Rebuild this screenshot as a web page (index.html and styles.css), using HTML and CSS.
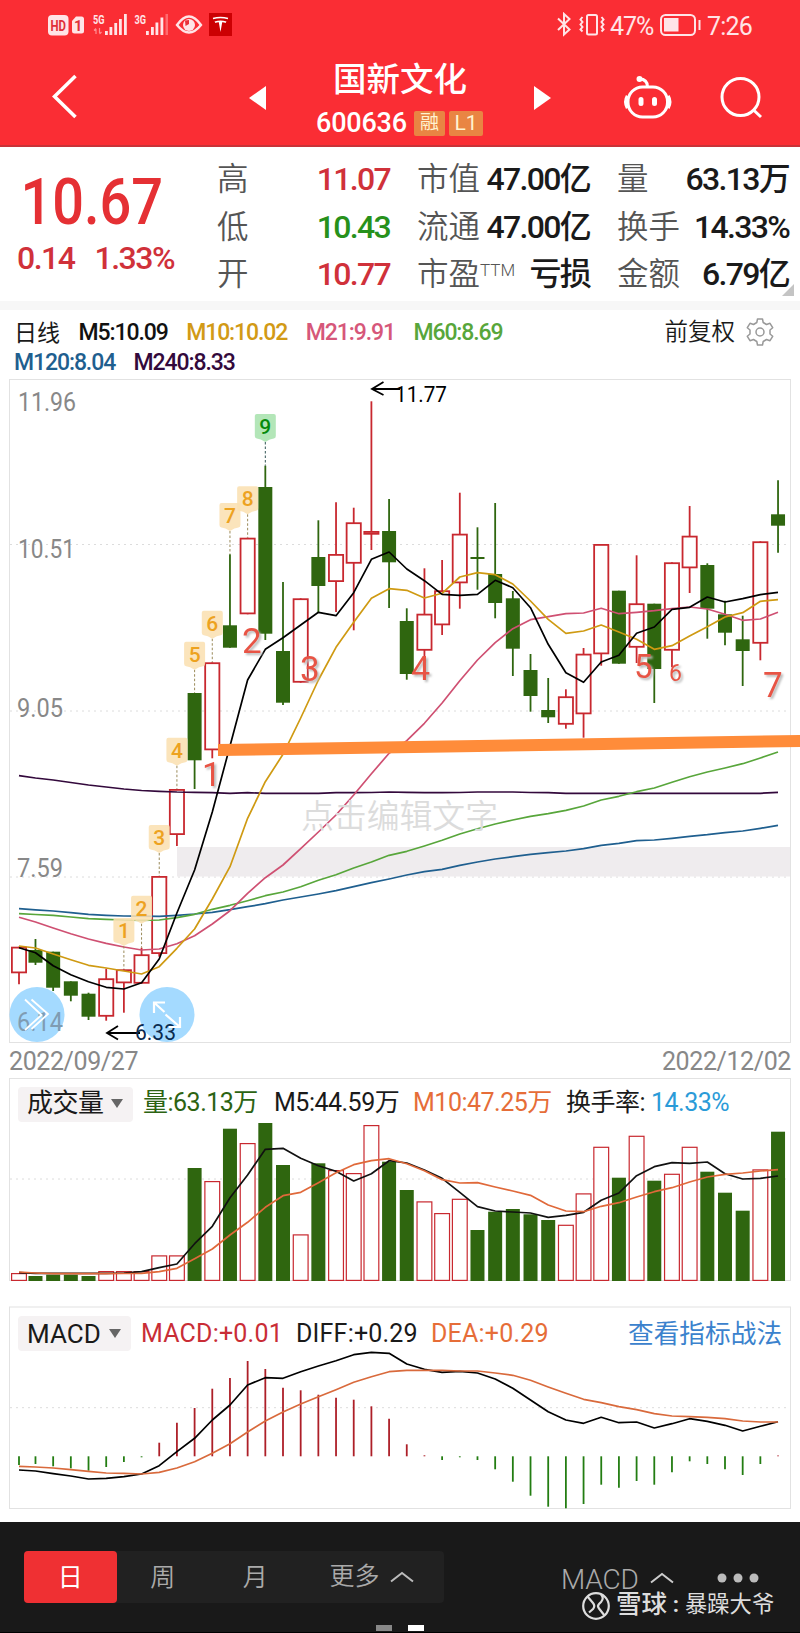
FILE: index.html
```
<!DOCTYPE html>
<html lang="zh-CN">
<head>
    <meta charset="UTF-8">
    <meta name="viewport" content="width=device-width, initial-scale=1.0">
    <title>国新文化 600636</title>
    <link rel="stylesheet" href="styles.css">
</head>
<body>

    <header class="header">
        <div class="status">
            <svg width="200" height="48" viewBox="40 0 200 48">
                <rect x="48" y="15" width="20.5" height="20.5" rx="4" fill="#ffe4e7"/>
                <text x="50.5" y="31" font-size="14.5" font-weight="700" fill="#e0303a" textLength="15.5" lengthAdjust="spacingAndGlyphs">HD</text>
                <path d="M76 16.5h5.5q2.5 0 2.5 2.5v12q0 2.5-2.5 2.5h-7q-2.5 0-2.5-2.5v-10z" fill="#ffe4e7"/>
                <text x="74" y="31" font-size="14.5" font-weight="700" fill="#e0303a">1</text>
                <text x="93" y="23.5" font-size="12.5" font-weight="700" fill="#ffe4e7" textLength="11.5" lengthAdjust="spacingAndGlyphs">5G</text>
                <path d="M96 29v5M94 30.500l2-2M99.500 28v5M101.500 32l-2 2" stroke="#ff8d92" stroke-width="1.2" fill="none"/>
                <g fill="#ffe4e7">
                    <rect x="105" y="31" width="2.8" height="4"/>
                    <rect x="109.5" y="27" width="2.8" height="8"/>
                    <rect x="114.3" y="23" width="2.8" height="12"/>
                    <rect x="119" y="19" width="2.8" height="16"/>
                    <rect x="124" y="14" width="2.8" height="21"/>
                    <rect x="146" y="31" width="2.8" height="4"/>
                    <rect x="151" y="27" width="2.8" height="8"/>
                    <rect x="155.5" y="22.5" width="2.8" height="12.5"/>
                    <rect x="160.5" y="17.5" width="2.8" height="17.5"/>
                </g>
                <rect x="165.5" y="14" width="2.5" height="21" fill="#ff6a6f"/>
                <text x="134.5" y="23.5" font-size="12.5" font-weight="700" fill="#ffe4e7" textLength="11.5" lengthAdjust="spacingAndGlyphs">3G</text>
                <path d="M177 25q12-17 24 0q-12 15-24 0z" fill="none" stroke="#ffe4e7" stroke-width="2.4"/>
                <circle cx="189" cy="25" r="6" fill="#ffe4e7"/>
                <path d="M185 20.500l4-.5v4l-3.500 2z" fill="#e8303a"/>
                <rect x="209" y="13" width="23" height="23" fill="#cc0003"/>
                <path d="M213 18.500q7.500-2 15 0" fill="none" stroke="#fff" stroke-width="1.4"/>
                <path d="M214.500 21.500q6-2 12 0l-1 1.500q-1.500-1-3.300-.8L220.500 32l-1.700-9.800q-1.800-.2-3.300.8z" fill="#fff"/>
            </svg>
            <div class="status-right">
                <svg width="50" height="26" viewBox="555 12 50 26" fill="none" stroke="#ffe4e7" stroke-width="2">
                    <path d="M558 18.500l11.500 11L564 34.500V14l5.500 5L558 30"/>
                    <rect x="587" y="15" width="10" height="19.5" rx="1.5"/>
                    <path d="M582.500 17l-2 2.500 2 2.500-2 2.500 2 2.500-2 2.500 2 2M601.500 17l2 2.500-2 2.500 2 2.500-2 2.500 2 2.500-2 2"/>
                </svg>
                <span class="battery-text">47%</span>
                <svg width="42" height="26" viewBox="657 12 42 26" fill="none" stroke="#ffe4e7">
                    <rect x="659" y="15" width="34" height="20" rx="4.5" stroke-width="2"/>
                    <rect x="662" y="18" width="14.5" height="13.5" fill="#ffe4e7" stroke="none"/>
                    <path d="M697.500 20v10" stroke-width="2"/>
                </svg>
                <span class="clock">7:26</span>
            </div>
        </div>
        <div class="nav">
            <div class="nav-back">
                <svg width="26" height="46" viewBox="52 73 26 46"><path d="M75.500 76L54.500 96.500L75.500 117" fill="none" stroke="#fff" stroke-width="3.6"/></svg>
            </div>
            <div class="nav-center">
                <svg width="17" height="24" viewBox="0 0 17 24"><path d="M0 12L17 0V24z" fill="#fff"/></svg>
                <div class="nav-title">
                    <h1>国新文化</h1>
                    <div class="code-row"><span class="code">600636</span><span class="tag">融</span><span class="tag tag-level">L1</span></div>
                </div>
                <svg width="17" height="24" viewBox="0 0 17 24"><path d="M17 12L0 0V24z" fill="#fff"/></svg>
            </div>
            <div class="nav-icons">
                <svg width="50" height="46" viewBox="622 74 50 46" fill="none" stroke="#fff" stroke-width="3">
                    <rect x="628" y="87" width="39.5" height="30" rx="14.5"/>
                    <path d="M627.500 96q-3.500 6 0 12M668 96q3.500 6 0 12" stroke-width="3.5"/>
                    <path d="M647.500 87q0-8-8-8"/>
                    <circle cx="639.5" cy="79" r="1.5"/>
                    <path d="M641 99.500v4M654.500 99.500v4" stroke-width="5" stroke-linecap="round"/>
                </svg>
                <svg width="46" height="46" viewBox="718 74 46 46" fill="none" stroke="#fff" stroke-width="3">
                    <circle cx="740.5" cy="97" r="18.5"/>
                    <path d="M753 109.500l8 7.500"/>
                </svg>
            </div>
        </div>
    </header>

    <section class="quote">
        <div class="quote-price">
            <div class="price">10.67</div>
            <div class="change"><span>0.14</span><span>1.33%</span></div>
        </div>
        <div class="stats">
            <div class="stat"><label>高</label><b class="up">11.07</b></div>
            <div class="stat"><label>市值</label><b>47.00亿</b></div>
            <div class="stat"><label>量</label><b>63.13万</b></div>
            <div class="stat"><label>低</label><b class="down">10.43</b></div>
            <div class="stat"><label>流通</label><b>47.00亿</b></div>
            <div class="stat"><label>换手</label><b>14.33%</b></div>
            <div class="stat"><label>开</label><b class="up">10.77</b></div>
            <div class="stat"><label>市盈<sup>TTM</sup></label><b>亏损</b></div>
            <div class="stat"><label>金额</label><b>6.79亿</b></div>
        </div>
        <i class="corner"></i>
    </section>

    <section class="legend">
        <div class="legend-row">
            <span class="period">日线</span>
            <span class="c-m5">M5:10.09</span>
            <span class="c-m10">M10:10.02</span>
            <span class="c-m21">M21:9.91</span>
            <span class="c-m60">M60:8.69</span>
            <span class="adjust">前复权</span>
            <svg width="30" height="30" viewBox="-15 -15 30 30" fill="none" stroke="#999" stroke-width="1.5" stroke-linejoin="round">
                <path d="M-3.200-9.500L-2.500-13H2.500L3.200-9.500L6.500-7.500L10-8.700L12.700-4.300L10-2V2L12.700 4.300L10 8.700L6.500 7.500L3.200 9.500L2.500 13H-2.500L-3.200 9.500L-6.500 7.500L-10 8.700L-12.700 4.300L-10 2V-2L-12.700-4.300L-10-8.700L-6.500-7.500z"/>
                <circle r="4"/>
            </svg>
        </div>
        <div class="legend-row">
            <span class="c-m120">M120:8.04</span>
            <span class="c-m240">M240:8.33</span>
        </div>
    </section>

    <svg id="kline" class="kline" width="800" height="665" viewBox="0 378 800 665"></svg>

    <div class="dates"><span>2022/09/27</span><span>2022/12/02</span></div>

    <section class="panel panel-volume">
        <svg id="volume" width="800" height="204" viewBox="0 1078 800 204"></svg>
        <div class="panel-head">
            <span class="pill">成交量<i></i></span>
            <span class="v-vol">量:63.13万</span>
            <span class="v-m5">M5:44.59万</span>
            <span class="v-m10">M10:47.25万</span>
            <span class="v-turn">换手率:</span>
            <span class="v-rate">14.33%</span>
        </div>
    </section>

    <section class="panel panel-macd">
        <svg id="macd" width="800" height="204" viewBox="0 1306 800 204"></svg>
        <div class="panel-head">
            <span class="pill">MACD<i></i></span>
            <span class="m-macd">MACD:+0.01</span>
            <span class="m-diff">DIFF:+0.29</span>
            <span class="m-dea">DEA:+0.29</span>
            <span class="m-link">查看指标战法</span>
        </div>
    </section>

    <footer class="footer">
        <div class="tabs">
            <span class="tab active">日</span>
            <span class="tab">周</span>
            <span class="tab">月</span>
            <span class="tab tab-more">更多<svg width="24" height="12" viewBox="0 0 24 12"><path d="M1 10.500L12 2L23 10.500" fill="none" stroke="#bbb" stroke-width="2"/></svg></span>
        </div>
        <div class="footer-right">
            <span>MACD</span>
            <svg width="24" height="12" viewBox="0 0 24 12"><path d="M1 10.500L12 2L23 10.500" fill="none" stroke="#ccc" stroke-width="2"/></svg>
            <svg class="dots" width="42" height="10" viewBox="0 0 42 10" fill="#bbb"><circle cx="5" cy="5" r="4.5"/><circle cx="21" cy="5" r="4.5"/><circle cx="37" cy="5" r="4.5"/></svg>
        </div>
        <div class="watermark">
            <svg width="30" height="30" viewBox="-15 -15 30 30" fill="none" stroke="#ddd" stroke-width="2.2">
                <circle r="12.8"/>
                <path d="M-8.500-9.500L-3-3Q-.5 0-3 3L-7 6.500M5-11.500Q8.500-8 5-4L3-2Q1 0 3 2.500L8.500 9.500"/>
            </svg>
            <strong>雪球</strong><em>:</em><span>暴躁大爷</span>
        </div>
        <div class="pager"><i></i><i class="on"></i></div>
    </footer>

    <script src="chart.js"></script>
</body>
</html>
```
FILE: styles.css
```
* {
    box-sizing: border-box;
}
body {
    margin: 0;
    width: 800px;
    background: #fff;
    color: #1a1a1a;
    font-family: Roboto, "Noto Sans CJK SC", sans-serif;
}
svg {
    display: block;
    flex: none;
}
svg text {
    font-family: Roboto, "Noto Sans CJK SC", sans-serif;
}

/* header */
.header {
    height: 147px;
    background: #fa2d34;
    border-bottom: 2px solid #c83238;
    color: #fff;
}
.status {
    display: flex;
    justify-content: space-between;
    height: 48px;
    padding: 0 48px 0 40px;
    color: #ffe4e7;
}
.status-right {
    display: flex;
    align-items: center;
    padding-top: 2px;
    font-size: 25px;
}
.battery-text {
    width: 47px;
    margin: 2px 2px 0 5px;
    letter-spacing: -1px;
}
.clock {
    width: 45px;
    margin: 2px 0 0 6px;
    letter-spacing: -0.8px;
}
.nav {
    display: grid;
    grid-template-columns: 249px 302px 249px;
    height: 97px;
}
.nav-back {
    padding: 25px 0 0 52px;
}
.nav-center {
    display: flex;
    justify-content: space-between;
}
.nav-center > svg {
    margin-top: 38px;
}
.nav-title {
    width: 168px;
}
.nav-title h1 {
    margin: 8px 0 4px;
    font-size: 33.5px;
    font-weight: 500;
    line-height: 48px;
    text-align: center;
}
.code-row {
    display: flex;
    align-items: center;
    height: 30px;
}
.code {
    width: 98px;
    font-size: 27px;
    font-weight: 500;
    letter-spacing: -0.2px;
}
.tag {
    width: 31px;
    height: 25px;
    background: #e98543;
    border-radius: 2px;
    color: #fff3d0;
    font-size: 19px;
    line-height: 24px;
    text-align: center;
}
.tag-level {
    width: 34px;
    margin-left: 4px;
    font-size: 21px;
}
.nav-icons {
    display: flex;
    gap: 46px;
    padding: 26px 0 0 71px;
}

/* quote */
.quote {
    position: relative;
    display: flex;
    height: 163px;
    border-bottom: 9px solid #f7f7f7;
}
.quote-price {
    width: 218px;
    padding: 17px 0 0 17px;
    color: #e53034;
}
.price {
    width: 170px;
    padding-left: 4px;
    font-size: 65px;
    font-weight: 500;
    line-height: 76px;
    transform: scaleX(0.86);
    transform-origin: left;
}
.change {
    display: flex;
    gap: 20px;
    font-size: 32px;
    font-weight: 500;
    line-height: 36px;
    letter-spacing: -1.5px;
    color: #d0313a;
}
.stats {
    display: grid;
    grid-template-columns: 172px 172px 171px;
    grid-auto-rows: 47.5px;
    column-gap: 28px;
    padding-top: 9px;
}
.stat {
    display: flex;
    justify-content: space-between;
    white-space: nowrap;
    line-height: 47px;
}
.stat label {
    margin-left: -1px;
    font-size: 31.5px;
    font-weight: 350;
    color: #555;
}
.stat sup {
    font-size: 17px;
    font-weight: 300;
    line-height: 1;
    vertical-align: 9px;
}
.stat b {
    font-size: 32px;
    font-weight: 500;
    letter-spacing: -1.7px;
}
.up {
    color: #d0313a;
}
.down {
    color: #27911b;
}
.corner {
    position: absolute;
    right: 6px;
    bottom: 5px;
    border-left: 12px solid transparent;
    border-bottom: 12px solid #c4c4c4;
}

/* moving average legend */
.legend {
    height: 68px;
    padding: 7px 25px 0 14px;
}
.legend-row {
    display: flex;
    align-items: center;
    height: 30px;
    font-size: 23px;
    font-weight: 500;
    letter-spacing: -1.1px;
    white-space: nowrap;
}
.legend-row span {
    margin-right: 18.5px;
}
.legend-row .period {
    position: relative;
    top: -1px;
    font-weight: 400;
    letter-spacing: 0;
}
.legend-row .adjust {
    position: relative;
    top: -2px;
    margin: 0 10px 0 auto;
    font-size: 23.5px;
    font-weight: 350;
    letter-spacing: 0;
}
.c-m5 { color: #111; }
.c-m10 { color: #d29a16; }
.c-m21 { color: #d6577a; }
.c-m60 { color: #58a63b; }
.c-m120 { color: #1f5f8f; }
.c-m240 { color: #33093c; }

.dates {
    display: flex;
    justify-content: space-between;
    height: 35px;
    padding: 0 9px;
    color: #888;
    font-size: 25px;
    line-height: 38px;
    letter-spacing: -0.4px;
}

/* sub charts */
.panel {
    display: grid;
    height: 204px;
}
.panel > * {
    grid-area: 1 / 1;
}
.panel-macd {
    margin-top: 24px;
}
.panel-head {
    display: flex;
    align-items: center;
    height: 35px;
    margin: 9px 0 0 18px;
    font-size: 25px;
    letter-spacing: -0.5px;
    line-height: 32px;
    white-space: nowrap;
}
.panel-volume .panel-head > span {
    padding-bottom: 3px;
}
.pill {
    display: flex;
    align-items: center;
    justify-content: space-between;
    width: 115px;
    height: 35px;
    padding: 0 10px 0 9px;
    margin-right: 10px;
    background: #f5f2f3;
    border-radius: 4px;
}
.panel-volume .pill {
    font-size: 26px;
}
.pill i {
    border: 6.5px solid transparent;
    border-top: 9px solid #666;
    border-bottom: 0;
}
.v-vol { width: 131px; color: #2c6312; }
.v-m5 { width: 139px; }
.v-m10 { width: 153px; color: #e66d38; }
.v-turn { width: 85px; }
.v-rate { color: #2b9bd8; }
.panel-macd .panel-head { padding-top: 2px; }
.panel-macd .pill { width: 113px; font-size: 26px; letter-spacing: 0; }
.m-macd { width: 155px; color: #c92d36; letter-spacing: 0.2px; }
.m-diff { width: 135px; letter-spacing: 0.2px; }
.m-dea { width: 197px; color: #e66d38; letter-spacing: 0.2px; }
.m-link { font-size: 25.7px; color: #3b82cd; letter-spacing: 0; }

/* bottom bar */
.footer {
    position: relative;
    display: flex;
    justify-content: space-between;
    height: 111px;
    margin-top: 12px;
    padding: 29px 41px 0 24px;
    background: #191919;
    border-bottom: 1px solid #000;
    color: #aaa;
}
.tabs {
    display: flex;
    width: 420px;
    height: 52px;
    background: #212121;
    border-radius: 4px;
    font-size: 25px;
    font-weight: 350;
    line-height: 54px;
}
.tab {
    width: 92.5px;
    text-align: center;
}
.tab.active {
    background: #ef3033;
    border-radius: 4px;
    color: #fff;
    font-weight: 400;
}
.tab-more {
    display: flex;
    align-items: center;
    gap: 10px;
    width: 141px;
    padding-left: 28px;
}
.footer-right {
    display: flex;
    align-items: center;
    height: 54px;
    font-size: 28px;
    font-weight: 300;
}
.footer-right span {
    width: 89px;
    padding-top: 2px;
    letter-spacing: -0.2px;
}
.dots {
    margin-left: 43px;
}
.watermark {
    position: absolute;
    left: 581px;
    top: 68px;
    display: flex;
    align-items: center;
    height: 32px;
    color: #ddd;
    font-size: 22.3px;
    line-height: 32px;
}
.watermark strong {
    margin-left: 5px;
    font-size: 25.5px;
    font-weight: 500;
}
.watermark em {
    width: 18px;
    text-align: center;
    font-style: normal;
    font-weight: 700;
}
.watermark strong,
.watermark em,
.watermark span {
    padding-bottom: 4px;
}
.pager {
    position: absolute;
    left: 376px;
    bottom: 1px;
    display: flex;
    gap: 16px;
}
.pager i {
    width: 16px;
    height: 6px;
    background: #888;
}
.pager .on {
    background: #fff;
}

/* hand-numbered candles */
.mark {
    filter: drop-shadow(2px 2px 1px #bbb);
}
```
FILE: chart.js
```
const RED = '#c8282f';
const GREEN = '#2f660f';
const px = i => i === 0 ? 19 : 17.8 + 17.68 * i;

// colour, high, body top, body bottom, low
const candles = [
    ['r', 946.7, 946.7, 973.3, 984.3], ['g', 939, 950, 962.7, 965], ['g', 951.7, 951.7, 987.7, 991],
    ['g', 981.3, 981.3, 995.7, 1001.3], ['g', 992.7, 993.7, 1016.7, 1020], ['r', 968.7, 978.3, 1016.7, 1020.7],
    ['r', 969.3, 969.3, 983.3, 1012.7], ['r', 947.7, 954.3, 983.7, 983.7], ['r', 876, 876, 954, 956.7],
    ['r', 789, 789, 835, 846], ['g', 693, 693, 760.3, 789], ['r', 662.3, 662.3, 750.3, 758.3],
    ['g', 554.3, 625.3, 647.7, 647.7], ['r', 537.7, 537.7, 614.3, 614.3], ['g', 465.7, 487, 633.7, 640],
    ['g', 582, 651, 702.7, 705], ['r', 598.3, 598.3, 682.7, 682.7], ['g', 520.3, 557, 586, 612],
    ['r', 502.3, 554, 582, 612], ['r', 507.7, 522.3, 563.7, 630.3], ['r', 401.3, 531, 534.7, 550],
    ['g', 499, 531, 562.3, 608], ['g', 608.3, 621, 674, 679.7], ['r', 568.3, 613.7, 650.7, 658],
    ['r', 560, 590.3, 625.3, 635], ['r', 492.7, 533.7, 583.3, 608.7], ['g', 527.3, 557, 559, 589.7],
    ['g', 503, 574, 603, 618.3], ['g', 591, 598.3, 648.7, 676], ['g', 654, 670, 696, 711.7],
    ['g', 678, 710, 717.3, 723], ['r', 689.3, 696.3, 724.7, 728.7], ['r', 648, 653.7, 714.3, 737.7],
    ['r', 544, 544, 654.3, 665.7], ['g', 590.7, 590.7, 663.7, 663.7], ['r', 555.3, 603.3, 647.7, 663],
    ['g', 603.7, 603.7, 669, 703], ['r', 562.3, 562.3, 650.7, 667.3], ['r', 506, 535.7, 568.3, 593],
    ['g', 563.3, 565, 608.7, 638.7], ['g', 600.7, 614.3, 632.7, 645.3], ['g', 615.7, 639.3, 651, 686],
    ['r', 541.3, 541.3, 643.7, 660.3], ['g', 480.3, 514.3, 525.7, 552.7]
];

const ma5 = [947.7, 952.7, 965.7, 974.7, 981.7, 987.3, 989, 982.7, 959, 913, 870, 812, 746, 680, 649.3, 637.7, 625, 612.3, 615.7, 592.7, 559.3, 552, 569, 580.7, 594.3, 595.3, 594.3, 580.3, 587.7, 607.7, 644.3, 672.7, 682.3, 662, 655.3, 633.3, 627, 609.3, 607.3, 597, 602, 598.7, 594.7, 592.3];
const ma10 = [946, 948, 954, 959.7, 965.3, 968, 971, 974, 966.7, 948.3, 929, 899, 866.7, 818.3, 781.7, 754.3, 718, 680, 647.3, 622.3, 598.3, 588.7, 590.3, 598, 593.3, 577, 572.7, 574.7, 584, 601, 619.3, 633.3, 631, 625, 632, 639.3, 649.3, 645.7, 636, 626.7, 617, 612.7, 601.3, 599.7];
const ma21 = [917.3, 922, 928, 933.7, 939, 943.3, 947, 950, 949, 943.7, 935.7, 924, 910.7, 893.3, 877.7, 865, 848.7, 832, 815, 795, 773.7, 753.3, 740.7, 723.3, 703, 680.7, 660, 642.7, 628.7, 619.7, 616.7, 613.7, 613, 608.3, 613.7, 612.3, 610.7, 608.7, 607, 609, 614.3, 620.3, 619, 612.3];
const ma60 = [913.7, 914.5, 915.3, 917, 918.7, 919.3, 920, 920.3, 920, 917.7, 914.3, 909.3, 905.3, 900.7, 895.7, 892, 886.7, 880.3, 874.7, 868, 862, 855.3, 851.3, 846, 840.3, 834, 828.7, 824, 820, 816.3, 813.7, 810.3, 806, 800, 796.3, 791.7, 788, 782.3, 776.7, 772, 768, 763.7, 758, 752];
const ma120 = [908.7, 909.8, 911, 912.7, 914.3, 915.3, 916, 916.2, 916.3, 915.3, 914, 912.3, 909.7, 906.7, 903.7, 900, 897, 894, 890.7, 886.7, 882.7, 879, 875, 871.7, 869.3, 865.3, 862, 859, 856.7, 854.3, 852.7, 851, 848.7, 845.3, 843.3, 840.7, 840, 838.3, 836.3, 834.7, 832.7, 831, 828.3, 825.3];
const ma240 = [775.7, 778, 780, 782.5, 785, 787, 789, 790.5, 791.3, 792, 792.3, 792.7, 793.3, 792.7, 793.3, 793.3, 793.3, 793.3, 792.7, 792.7, 792.5, 792, 792.3, 792.7, 792.7, 792.5, 792, 792, 792, 792.5, 792.7, 793.3, 793.3, 793.3, 793.3, 793.3, 793.3, 793.3, 793.3, 793.3, 793.3, 793.3, 793.3, 792.3];

const volTop = [1273, 1276, 1274.7, 1274.7, 1276, 1271, 1271, 1271, 1255.3, 1255.3, 1168, 1181, 1128.7, 1143, 1123, 1165, 1234.3, 1163.3, 1170, 1173, 1125, 1161.7, 1190, 1201.3, 1213, 1198.7, 1230, 1211.7, 1209, 1214.3, 1220, 1224.7, 1193.3, 1146.7, 1177.7, 1135.7, 1180.7, 1173.7, 1146.7, 1171.7, 1192.7, 1210.7, 1169.3, 1131.7];
const vol5 = [1272.7, 1273.3, 1273.3, 1273.3, 1273.3, 1273.3, 1273, 1271.7, 1267.7, 1264, 1243.7, 1226.3, 1197.7, 1175, 1149.3, 1148.3, 1158.3, 1165.7, 1171.3, 1181, 1173.7, 1160.7, 1163, 1170, 1178.3, 1192.3, 1206.7, 1211, 1212, 1213, 1217.3, 1215.3, 1212.3, 1200.3, 1193, 1175.7, 1166.7, 1162.7, 1163.3, 1162, 1173.7, 1179, 1178.3, 1176];
const vol10 = [1272, 1273, 1273.7, 1273.7, 1273.7, 1273.7, 1273.5, 1273.3, 1271.7, 1268.3, 1258.7, 1249, 1235, 1222.3, 1207.3, 1195.7, 1192.3, 1182.7, 1172.7, 1164.7, 1160.7, 1158.7, 1163.7, 1170.7, 1179.7, 1183, 1182.7, 1187, 1191, 1195.3, 1205, 1211, 1211.7, 1206.3, 1202.7, 1197, 1191.7, 1187.7, 1182, 1177, 1174.3, 1173, 1171, 1169.7];

const macdEnd = [1465, 1464, 1466.3, 1468.3, 1470.7, 1467, 1462, 1457.3, 1442.7, 1422.7, 1408, 1388.7, 1378, 1361, 1369, 1387.7, 1390.3, 1394.7, 1397.7, 1399.7, 1406.3, 1418.7, 1444.3, 1455.3, 1460, 1457.3, 1460, 1469.3, 1481.7, 1495.7, 1506.7, 1508.3, 1504, 1484.7, 1487.7, 1481, 1484.7, 1472.3, 1461.3, 1464, 1469.3, 1475, 1464, 1455.5];
const diff = [1470, 1471, 1473.7, 1476, 1479, 1478.3, 1476.7, 1474, 1465.7, 1451.7, 1438.3, 1420, 1405, 1385, 1377.7, 1378.3, 1371.7, 1366, 1360.7, 1354.7, 1352.3, 1353.3, 1364, 1369.3, 1372.3, 1371.3, 1373, 1379, 1388.3, 1400, 1411.7, 1420, 1423.3, 1417.3, 1422.7, 1422, 1428, 1423.7, 1418.7, 1421.3, 1425.3, 1431, 1426.3, 1421.7];
const dea = [1466.3, 1467, 1468, 1469.7, 1471.3, 1473, 1473.3, 1474, 1472.3, 1468, 1461.7, 1453.3, 1443.7, 1432, 1421, 1412, 1404, 1396.7, 1389.7, 1382.3, 1376.7, 1371.7, 1370.3, 1370.3, 1370.3, 1371, 1371, 1373, 1375.3, 1380.3, 1387, 1393.3, 1399.3, 1402.7, 1406.7, 1409.7, 1413.7, 1416, 1416.7, 1417.3, 1418.7, 1421, 1422, 1422];

function line(data, color, w = 1.7) {
    const pts = data.map((y, i) => `${px(i).toFixed(1)},${y}`).join(' ');
    return `<polyline points="${pts}" fill="none" stroke="${color}" stroke-width="${w}" stroke-linejoin="round"/>`;
}

function frame(top, bottom, grid) {
    return `<rect x="9.5" y="${top}" width="781" height="${bottom - top}" fill="none" stroke="#e2e2e2"/>` +
        grid.map(y => `<path d="M10 ${y}H790" stroke="#dcdcdc" stroke-dasharray="2 4"/>`).join('');
}

function bar(i, color, top, bottom, w) {
    const x = px(i);
    if (color === 'g') {
        return `<rect x="${x - 7}" y="${top}" width="14" height="${bottom - top}" fill="${GREEN}"/>`;
    }
    return `<rect x="${x - 8 + w / 2}" y="${top + w / 2}" width="${16 - w}" height="${Math.max(bottom - top - w, 1)}" fill="#fff" stroke="${RED}" stroke-width="${w}"/>`;
}

function text(x, y, str, size, color, width, extra = '') {
    const fit = width ? `textLength="${width}" lengthAdjust="spacingAndGlyphs"` : '';
    return `<text x="${x}" y="${y}" font-size="${size}" fill="${color}" ${fit} ${extra}>${str}</text>`;
}

function badge(i, top, n) {
    const x = px(i), c = n === 9 ? '#a9e3ae' : '#fbe0b2', t = n === 9 ? '#078a0b' : '#eda21f';
    return `<path d="M${x} ${top + 28}V${candles[i][1]}" stroke="${n === 9 ? '#355' : '#9a8a5a'}" stroke-dasharray="2.5 2"/>` +
        `<path d="M${x - 8.5} ${top}h17q2 0 2 2v20q0 2-2 2.5l-4 1l-4.500 2.500l-4.500-2.500l-4-1q-2-.5-2-2.500v-20q0-2 2-2z" fill="${c}" fill-opacity=".88"/>` +
        text(x, top + 20, n, 21, t, 0, 'font-weight="500" text-anchor="middle"');
}

function drawKline() {
    let s = frame(379.5, 1042.5, [544.5, 711, 877]);
    s += '<rect x="177" y="847" width="613" height="29.5" fill="#efecee"/>';
    s += text(18, 410.5, '11.96', 25, '#888', 58) + text(18, 558, '10.51', 25, '#888', 57);
    s += text(17, 717, '9.05', 25, '#888', 46) + text(17, 876.5, '7.59', 25, '#888', 46);
    candles.forEach(([c, high, top, bottom, low], i) => {
        s += `<path d="M${px(i)} ${high}V${low}" stroke="${c === 'r' ? RED : GREEN}" stroke-width="1.8"/>`;
        s += bar(i, c, top, bottom, 1.8);
    });
    s += line(ma240, '#33093c') + line(ma120, '#1f5f8f') + line(ma60, '#58a63b');
    s += line(ma21, '#cf5072') + line(ma10, '#cf9a12') + line(ma5, '#000');
    [918, 895.7, 825, 737.7, 641.7, 610.7, 503, 486.3, 414].forEach((top, k) => s += badge(k + 6, top, k + 1));

    // high and low marks
    s += '<path d="M372 389H400M383.500 382L372 389L383.500 395M107 1033H140M118 1026L107 1033L118 1039.500" fill="none" stroke="#000" stroke-width="1.8"/>';
    s += text(395, 401.7, '11.77', 22, '#000', 52);

    s += text(301, 828, '点击编辑文字', 33, '#dcdcdc', 197, 'font-weight="350"');
    s += '<path d="M218 744L800 735V747L218 756z" fill="#ff8c3a"/>';

    const marks = [['1', 202, 786, 34], ['2', 242, 653, 35], ['3', 300, 681, 35], ['4', 411, 680, 34], ['5', 634, 678, 33], ['6', 669, 681, 23], ['7', 763, 697, 35]];
    marks.forEach(([n, x, y, size]) => s += text(x, y, n, size, '#e85445', 0, 'class="mark"'));

    // floating round buttons
    s += '<circle cx="37" cy="1014.5" r="27.5" fill="#8bcfff" fill-opacity=".78"/><circle cx="167" cy="1014.5" r="27.5" fill="#8bcfff" fill-opacity=".78"/>';
    s += text(17, 1030.5, '6.14', 25, '#7f9cb2', 46) + text(135, 1040, '6.33', 22, '#0a2a50', 41);
    s += '<path d="M25 999.500L41.500 1015L25 1030M31.500 999.500L48 1014L31.500 1029" fill="none" stroke="#fff" stroke-width="1.8"/>';
    s += '<path d="M154 1013V1002.500H165M154 1002.500L164.500 1012M180 1017V1027H169M180 1027L165.500 1014.500" fill="none" stroke="#fff" stroke-width="2.2"/>';
    document.getElementById('kline').innerHTML = s;
}

function drawVolume() {
    let s = frame(1078.5, 1280.5, [1179]);
    volTop.forEach((top, i) => s += bar(i, candles[i][0], top, 1281, 1.2));
    s += line(vol5, '#111') + line(vol10, '#e0693a');
    document.getElementById('volume').innerHTML = s;
}

function drawMacd() {
    let s = frame(1307, 1508.5, [1407.7]);
    macdEnd.forEach((y, i) => s += `<path d="M${px(i)} 1456.3V${y}" stroke="${y < 1456.3 ? '#ad1f28' : '#237d12'}" stroke-width="1.8"/>`);
    s += line(diff, '#000') + line(dea, '#d96a3c');
    document.getElementById('macd').innerHTML = s;
}

drawKline();
drawVolume();
drawMacd();
```
